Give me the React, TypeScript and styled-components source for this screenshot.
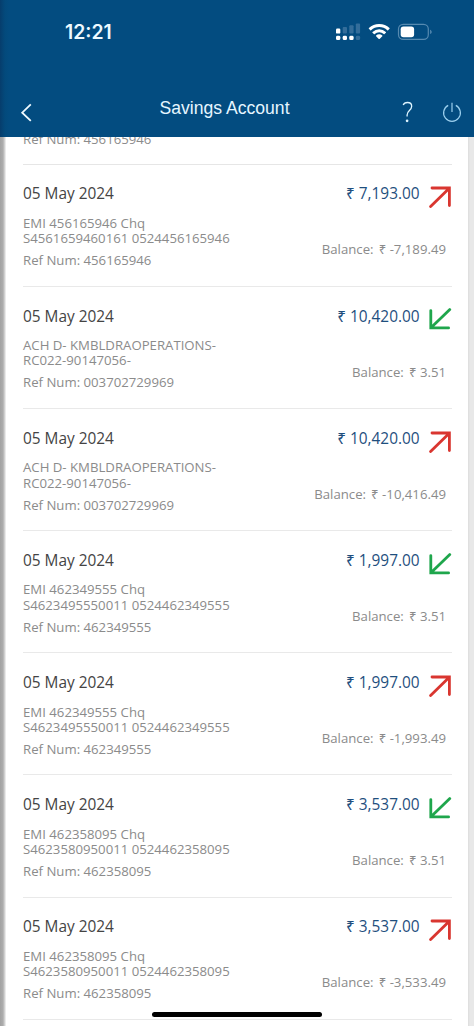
import React from "react";
import styled, { createGlobalStyle } from "styled-components";

const GlobalStyle = createGlobalStyle`
  * { box-sizing: border-box; }
  html, body { margin: 0; padding: 0; background: #fff; }
  body { overflow: hidden; }
`;

const Screen = styled.div`
  position: relative;
  width: 474px;
  height: 1026px;
  display: flex;
  flex-direction: column;
  overflow: hidden;
  background: #fff;
  font-family: "Open Sans", "Noto Sans", sans-serif;
`;

const Header = styled.header`
  flex: none;
  height: 137.4px;
  background: linear-gradient(to right, #063d6c 0, #034a7c 5px, #034c80 9px);
  color: #fff;
`;

const StatusBar = styled.div`
  display: flex;
  justify-content: space-between;
  align-items: center;
  height: 64px;
  padding: 0 41px 0 65px;
`;

const Clock = styled.span`
  font: 600 19.4px/24px Inter, sans-serif;
  letter-spacing: 0;
  color: #eefaff;
`;

const StatusIcons = styled.svg`
  display: block;
  width: 98px;
  height: 20px;
`;

const NavBar = styled.nav`
  display: grid;
  grid-template-columns: 110px 1fr 110px;
  align-items: center;
  height: 73px;
`;

const Title = styled.h1`
  margin: 0;
  padding-top: 14px;
  padding-right: 25px;
  text-align: center;
  white-space: nowrap;
  font: 400 17.6px/22px "Liberation Sans", Arial, sans-serif;
  color: #e6f6ff;
`;

const BackIcon = styled.svg`
  display: block;
  width: 12px;
  height: 20px;
  margin: 24px 0 0 20px;
`;

const NavActions = styled.div`
  display: flex;
  align-items: center;
  justify-content: flex-end;
  gap: 29px;
  padding: 23px 12px 0 0;
`;

const ActionIcon = styled.svg<{ $w: number }>`
  display: block;
  flex: none;
  width: ${(p) => p.$w}px;
  height: 22px;
`;

const Body = styled.main`
  flex: 1;
  min-height: 0;
  display: flex;
  overflow: hidden;
`;

const LeftShade = styled.div`
  flex: none;
  width: 6px;
  background: linear-gradient(to right, #a2a2a2 0, #adadad 3px, #dcdcdc 5px, #f8f8f8 6px);
`;

const RightShade = styled.div`
  flex: none;
  width: 6px;
  background: linear-gradient(to right, #dcdcdc 0, #e8e8e8 2px, #e8e8e8 100%);
`;

const List = styled.div`
  flex: 1;
  min-width: 0;
  padding: 0 16px 0 17px;
`;

const ClippedRow = styled.div`
  display: flex;
  flex-direction: column;
  justify-content: flex-end;
  height: 27.3px;
  padding-bottom: 15px;
  overflow: hidden;
  border-bottom: 1px solid #e6e6e6;
`;

const Row = styled.article`
  display: flex;
  justify-content: space-between;
  height: 122.17px;
  padding-top: 17.8px;
  border-bottom: 1px solid #e9e9e9;
`;

const Details = styled.div`
  display: flex;
  flex-direction: column;
`;

const DateText = styled.div`
  font-size: 15.4px;
  line-height: 24px;
  color: #444;
`;

const Narration = styled.div`
  margin-top: 9.4px;
  font-size: 13.2px;
  line-height: 15.4px;
  color: #8b8b8b;
  white-space: pre-line;
`;

const RefNum = styled.div`
  flex: none;
  margin-top: 3.5px;
  font-size: 13.2px;
  line-height: 20px;
  color: #8b8b8b;
  white-space: nowrap;
`;

const Amounts = styled.div`
  display: flex;
  flex-direction: column;
  align-items: flex-end;
`;

const AmountLine = styled.div`
  display: flex;
  gap: 9.4px;
`;

const Amount = styled.div`
  font-size: 15.4px;
  line-height: 24px;
  color: #1f4f7e;
`;

const Arrow = styled.svg`
  display: block;
  width: 23px;
  height: 23px;
  margin-top: 3.8px;
`;

const Balance = styled.div`
  margin-top: 30.2px;
  padding-right: 6px;
  font-size: 13.2px;
  line-height: 20px;
  color: #8b8b8b;
  span { margin-right: 1.7px; }
`;

const HomeIndicator = styled.div`
  position: absolute;
  left: 152px;
  bottom: 9px;
  width: 170px;
  height: 5.5px;
  border-radius: 3px;
  background: #000;
`;

type Entry = { text: string; ref: string; amount: string; balance: string; debit: boolean };

const emiA = "EMI 456165946 Chq\nS4561659460161 0524456165946";
const ach = "ACH D- KMBLDRAOPERATIONS-\nRC022-90147056-";
const emiB = "EMI 462349555 Chq\nS4623495550011 0524462349555";
const emiC = "EMI 462358095 Chq\nS4623580950011 0524462358095";

const entries: Entry[] = [
  { text: emiA, ref: "456165946", amount: "7,193.00", balance: "-7,189.49", debit: true },
  { text: ach, ref: "003702729969", amount: "10,420.00", balance: "3.51", debit: false },
  { text: ach, ref: "003702729969", amount: "10,420.00", balance: "-10,416.49", debit: true },
  { text: emiB, ref: "462349555", amount: "1,997.00", balance: "3.51", debit: false },
  { text: emiB, ref: "462349555", amount: "1,997.00", balance: "-1,993.49", debit: true },
  { text: emiC, ref: "462358095", amount: "3,537.00", balance: "3.51", debit: false },
  { text: emiC, ref: "462358095", amount: "3,537.00", balance: "-3,533.49", debit: true },
];

function DirectionArrow({ debit }: { debit: boolean }) {
  return (
    <Arrow viewBox="0 0 23 23" fill="none" strokeWidth="2.8" stroke={debit ? "#d93630" : "#1fa64c"}>
      {debit ? (
        <path d="M3 2H20.4V19.6M20 2.4L1.6 20.6" strokeLinecap="round" />
      ) : (
        <path d="M1.8 2.6V19.9H19.6M2.2 19.5L20.8 1.6" strokeLinecap="round" />
      )}
    </Arrow>
  );
}

export default function App() {
  return (
    <Screen>
      <GlobalStyle />
      <Header>
        <StatusBar>
          <Clock>12:21</Clock>
          <StatusIcons viewBox="0 0 98 20" fill="none">
            <g fill="#fff">
              <rect x="1" y="6.6" width="4.3" height="5" rx="1.2" />
              <rect x="1" y="13.8" width="4.3" height="4.3" rx="1.4" />
              <rect x="7.7" y="13.8" width="4.3" height="4.3" rx="1.4" />
              <rect x="14.3" y="13.8" width="4.3" height="4.3" rx="1.4" />
            </g>
            <g fill="#4d80a8" opacity=".65">
              <rect x="7.7" y="5" width="4.3" height="6.6" rx="1" />
              <rect x="14.3" y="3.3" width="4.3" height="8.3" rx="1" />
              <rect x="20.8" y="1.6" width="4.3" height="10" rx="1" />
              <rect x="20.8" y="13.8" width="4.3" height="4.3" rx="1.4" />
            </g>
            <g transform="translate(33.7 2)" fill="#fff">
              <path d="M10.5 0C14.5 0 18.1 1.5 20.8 4Q21.2 4.4 20.8 4.8L19.4 6.2Q19 6.6 18.6 6.2A11.9 11.9 0 0 0 2.4 6.2Q2 6.6 1.6 6.2L.2 4.8Q-.2 4.4 .2 4A15 15 0 0 1 10.5 0Z" />
              <path d="M10.5 5.2A9.8 9.8 0 0 1 17.2 7.9Q17.6 8.3 17.2 8.7L15.8 10Q15.4 10.4 15 10A6.8 6.8 0 0 0 6 10Q5.6 10.4 5.2 10L3.8 8.7Q3.4 8.3 3.8 7.9A9.8 9.8 0 0 1 10.5 5.2Z" />
              <path d="M10.5 10.3A5 5 0 0 1 13.6 11.4Q14 11.8 13.6 12.2L10.9 14.9Q10.5 15.3 10.1 14.9L7.4 12.2Q7 11.8 7.4 11.4A5 5 0 0 1 10.5 10.3Z" />
            </g>
            <rect x="63.5" y="2.4" width="29.8" height="15" rx="4.7" stroke="#568ab0" strokeWidth="1.2" />
            <rect x="65.7" y="4.5" width="13.4" height="10.8" rx="2.8" fill="#fff" />
            <path d="M95.1 7.7C97.2 8.4 97.2 11.4 95.1 12.1Z" fill="#568ab0" />
          </StatusIcons>
        </StatusBar>
        <NavBar>
          <BackIcon viewBox="0 0 12 20" fill="none" stroke="#effaff" strokeWidth="1.8">
            <path d="M10.8 1.3L2.2 9.7L10.8 17.9" />
          </BackIcon>
          <Title>Savings Account</Title>
          <NavActions>
            <ActionIcon $w={11} viewBox="0 0 11 22" fill="none">
              <path d="M1.2 4Q2.1 1.5 5.5 1.5C8 1.5 9.7 3 9.7 5.3C9.7 7.3 8.7 8.4 7.2 9.8C5.6 11.3 5.1 12 5.1 14V15.4" stroke="#dff5ff" strokeWidth="1.3" />
              <circle cx="5.1" cy="19.8" r="1.35" fill="#dff5ff" />
            </ActionIcon>
            <ActionIcon $w={20} viewBox="0 0 20 22" fill="none" stroke="#9bcfed" strokeWidth="1.2">
              <path d="M6.2 4.4A8.4 8.4 0 1 0 13.8 4.4M10 1.8V11" />
            </ActionIcon>
          </NavActions>
        </NavBar>
      </Header>
      <Body>
        <LeftShade />
        <List>
          <ClippedRow>
            <RefNum>Ref Num: 456165946</RefNum>
          </ClippedRow>
          {entries.map((e, i) => (
            <Row key={i}>
              <Details>
                <DateText>05 May 2024</DateText>
                <Narration>{e.text}</Narration>
                <RefNum>Ref Num: {e.ref}</RefNum>
              </Details>
              <Amounts>
                <AmountLine>
                  <Amount>₹ {e.amount}</Amount>
                  <DirectionArrow debit={e.debit} />
                </AmountLine>
                <Balance>
                  <span>Balance:</span> ₹ {e.balance}
                </Balance>
              </Amounts>
            </Row>
          ))}
        </List>
        <RightShade />
      </Body>
      <HomeIndicator />
    </Screen>
  );
}
